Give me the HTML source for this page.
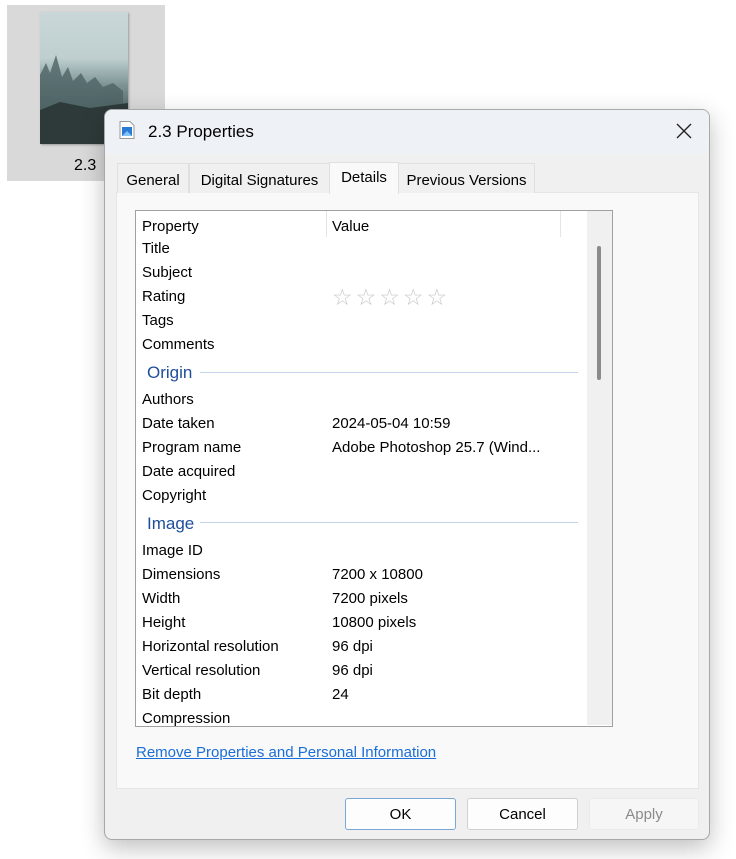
<!DOCTYPE html>
<html><head><style>
body{margin:0;width:736px;height:859px;background:#fff;position:relative;overflow:hidden;font-family:"Liberation Sans",sans-serif;font-size:15px;color:#000}
.a{position:absolute}
.row{position:absolute;left:142px;height:22px;line-height:22px;font-size:15px;margin-top:2px}
.val{position:absolute;left:332px;height:22px;line-height:22px;font-size:15px;margin-top:2px}
.grp{position:absolute;left:147px;color:#1f4e9b;font-size:17px;line-height:22px;margin-top:1px}
.gl{position:absolute;height:1px;background:#c5d3e8}
.tab{position:absolute;top:163px;height:29px;line-height:33px;background:#f0f0f0;border:1px solid #e0e0e0;border-bottom:none;text-align:center;font-size:15px}
.btn{position:absolute;top:798px;height:30px;line-height:32px;text-align:center;border:1px solid #d0d0d0;border-radius:3px;background:#fdfdfd;font-size:15px}
</style></head><body>
<div class="a" style="left:7px;top:5px;width:158px;height:176px;background:#d9d9d9"></div>
<div class="a" style="left:40px;top:12px;width:88px;height:132px;background:linear-gradient(180deg,#c9d7d8 0%,#bfcfd0 35%,#7e9596 55%,#4f6465 75%,#33403f 100%);box-shadow:1px 1px 2px #999"></div>
<svg class="a" style="left:40px;top:55px" width="88" height="89"><path d="M0 89V20l6-12 4 10 6-18 6 22 6-10 5 14 8-8 6 10 8-6 8 10 10-4 10 8V89z" fill="#4e6364" opacity=".8"/><path d="M0 89V55l20-8 30 6 38-5V89z" fill="#2e3a3a"/></svg>
<div class="a" style="left:74px;top:157px;font-size:16px">2.3</div>

<div class="a" style="left:104px;top:109px;width:604px;height:729px;border:1px solid #a8a8a8;border-radius:8px;background:#f0f0f0;box-shadow:0 8px 24px rgba(0,0,0,.25);overflow:hidden">
 <div class="a" style="left:0;top:0;width:604px;height:44px;background:#eef2f7"></div>
</div>
<svg class="a" style="left:119px;top:121px" width="16" height="18"><path d="M1 .5h10l4 4v13H1z" fill="#fff" stroke="#999"/><rect x="3" y="6" width="10" height="9" fill="#2a7bd6"/><path d="M3 15l5-5 5 5z" fill="#7fc4f5"/></svg>
<div class="a" style="left:148px;top:122px;font-size:17px">2.3 Properties</div>
<svg class="a" style="left:676px;top:123px" width="16" height="16"><path d="M1 1L15 15M15 1L1 15" stroke="#222" stroke-width="1.4"/></svg>

<div class="a" style="left:116px;top:192px;width:581px;height:595px;background:#f9f9f9;border:1px solid #e6e6e6"></div>
<div class="tab" style="left:117px;width:70px">General</div>
<div class="tab" style="left:189px;width:139px">Digital Signatures</div>
<div class="tab" style="left:329px;top:162px;height:31px;line-height:29px;width:68px;background:#f9f9f9;z-index:2">Details</div>
<div class="tab" style="left:398px;width:135px">Previous Versions</div>

<div class="a" style="left:135px;top:210px;width:476px;height:515px;background:#fff;border:1px solid #a0a0a0"></div>
<div class="a" style="left:587px;top:211px;width:25px;height:514px;background:#f0f0f0"></div>
<div class="a" style="left:597px;top:246px;width:4px;height:134px;background:#8a8a8a;border-radius:2px"></div>
<div class="a" style="left:326px;top:211px;width:1px;height:26px;background:#e5e5e5"></div>
<div class="a" style="left:560px;top:211px;width:1px;height:26px;background:#e5e5e5"></div>

<div class="row" style="top:214px">Property</div><div class="val" style="top:214px">Value</div>
<div class="row" style="top:236px">Title</div>
<div class="row" style="top:260px">Subject</div>
<div class="row" style="top:284px">Rating</div>
<div class="val" style="top:284px;color:#c8c8c8;font-size:23px;letter-spacing:3px">☆☆☆☆☆</div>
<div class="row" style="top:308px">Tags</div>
<div class="row" style="top:332px">Comments</div>
<div class="grp" style="top:361px">Origin</div><div class="gl" style="left:200px;top:372px;width:378px"></div>
<div class="row" style="top:387px">Authors</div>
<div class="row" style="top:411px">Date taken</div><div class="val" style="top:411px">2024-05-04 10:59</div>
<div class="row" style="top:435px">Program name</div><div class="val" style="top:435px">Adobe Photoshop 25.7 (Wind...</div>
<div class="row" style="top:459px">Date acquired</div>
<div class="row" style="top:483px">Copyright</div>
<div class="grp" style="top:512px">Image</div><div class="gl" style="left:200px;top:522px;width:378px"></div>
<div class="row" style="top:538px">Image ID</div>
<div class="row" style="top:562px">Dimensions</div><div class="val" style="top:562px">7200 x 10800</div>
<div class="row" style="top:586px">Width</div><div class="val" style="top:586px">7200 pixels</div>
<div class="row" style="top:610px">Height</div><div class="val" style="top:610px">10800 pixels</div>
<div class="row" style="top:634px">Horizontal resolution</div><div class="val" style="top:634px">96 dpi</div>
<div class="row" style="top:658px">Vertical resolution</div><div class="val" style="top:658px">96 dpi</div>
<div class="row" style="top:682px">Bit depth</div><div class="val" style="top:682px">24</div>
<div class="row" style="top:706px">Compression</div>

<div class="a" style="left:136px;top:744px;color:#1a6ed8;text-decoration:underline;font-size:15px">Remove Properties and Personal Information</div>

<div class="btn" style="left:345px;width:109px;border-color:#7aa7d6">OK</div>
<div class="btn" style="left:467px;width:109px">Cancel</div>
<div class="btn" style="left:589px;width:108px;color:#8a8a8a;border-color:#eaeaea;background:#f6f6f6">Apply</div>
</body></html>
